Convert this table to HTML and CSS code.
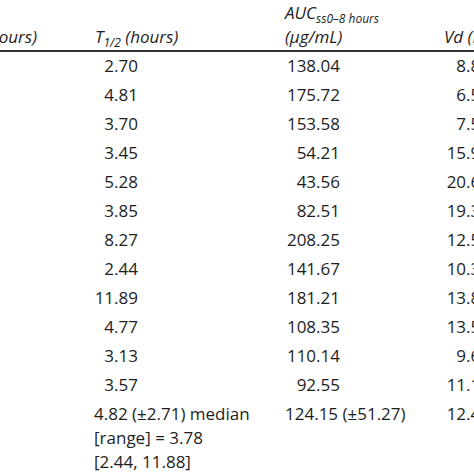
FILE: index.html
```html
<!DOCTYPE html>
<html>
<head>
<meta charset="utf-8">
<link rel="stylesheet" href="styles.css">
</head>
<body>
<div class="table">
  <div class="row head">
    <div class="cell c1"><span class="clip"><i>T<sub>max</sub> (hours)</i></span></div>
    <div class="cell c2"><i>T<sub>1/2</sub> (hours)</i></div>
    <div class="cell c3"><i>AUC<sub>ss0–8 hours</sub><br>(µg/mL)</i></div>
    <div class="cell c4"><i>Vd (L/kg)</i></div>
  </div>
  <div class="row"><div class="cell c1"></div><div class="cell c2"><span class="num n2">2.70</span></div><div class="cell c3"><span class="num n3">138.04</span></div><div class="cell c4"><span class="num n4">8.84</span></div></div>
  <div class="row"><div class="cell c1"></div><div class="cell c2"><span class="num n2">4.81</span></div><div class="cell c3"><span class="num n3">175.72</span></div><div class="cell c4"><span class="num n4">6.52</span></div></div>
  <div class="row"><div class="cell c1"></div><div class="cell c2"><span class="num n2">3.70</span></div><div class="cell c3"><span class="num n3">153.58</span></div><div class="cell c4"><span class="num n4">7.55</span></div></div>
  <div class="row"><div class="cell c1"></div><div class="cell c2"><span class="num n2">3.45</span></div><div class="cell c3"><span class="num n3">54.21</span></div><div class="cell c4"><span class="num n4">15.93</span></div></div>
  <div class="row"><div class="cell c1"></div><div class="cell c2"><span class="num n2">5.28</span></div><div class="cell c3"><span class="num n3">43.56</span></div><div class="cell c4"><span class="num n4">20.61</span></div></div>
  <div class="row"><div class="cell c1"></div><div class="cell c2"><span class="num n2">3.85</span></div><div class="cell c3"><span class="num n3">82.51</span></div><div class="cell c4"><span class="num n4">19.32</span></div></div>
  <div class="row"><div class="cell c1"></div><div class="cell c2"><span class="num n2">8.27</span></div><div class="cell c3"><span class="num n3">208.25</span></div><div class="cell c4"><span class="num n4">12.55</span></div></div>
  <div class="row"><div class="cell c1"></div><div class="cell c2"><span class="num n2">2.44</span></div><div class="cell c3"><span class="num n3">141.67</span></div><div class="cell c4"><span class="num n4">10.33</span></div></div>
  <div class="row"><div class="cell c1"></div><div class="cell c2"><span class="num n2">11.89</span></div><div class="cell c3"><span class="num n3">181.21</span></div><div class="cell c4"><span class="num n4">13.86</span></div></div>
  <div class="row"><div class="cell c1"></div><div class="cell c2"><span class="num n2">4.77</span></div><div class="cell c3"><span class="num n3">108.35</span></div><div class="cell c4"><span class="num n4">13.52</span></div></div>
  <div class="row"><div class="cell c1"></div><div class="cell c2"><span class="num n2">3.13</span></div><div class="cell c3"><span class="num n3">110.14</span></div><div class="cell c4"><span class="num n4">9.64</span></div></div>
  <div class="row"><div class="cell c1"></div><div class="cell c2"><span class="num n2">3.57</span></div><div class="cell c3"><span class="num n3">92.55</span></div><div class="cell c4"><span class="num n4">11.17</span></div></div>
  <div class="row"><div class="cell c1"></div><div class="cell c2">4.82 (±2.71) median<br>[range] = 3.78<br>[2.44, 11.88]</div><div class="cell c3">124.15 (±51.27)</div><div class="cell c4"><span class="num n4">12.46</span></div></div>
</div>
</body>
</html>
```
FILE: styles.css
```css
html, body {
  margin: 0;
  padding: 0;
  background: #ffffff;
  overflow: hidden;
}
body {
  width: 474px;
  height: 474px;
  font-family: "Open Sans", "Liberation Sans", sans-serif;
  font-size: 17px;
  line-height: 24px;
  color: #1d1d1d;
}
.table {
  display: flex;
  flex-direction: column;
  width: 560px;
}
.row {
  display: grid;
  grid-template-columns: 93px 192px 159px 116px;
  padding: 2px 0 3px;
}
.row.head {
  padding: 1px 0 1px;
  border-bottom: 2px solid #333333;
  align-items: end;
}
.cell {
  white-space: nowrap;
}
.head .cell {
  font-style: normal;
}
.c1 {
  display: flex;
  justify-content: flex-end;
  padding-right: 56px;
}
.c2 {
  padding-left: 1px;
}
.head .c2 {
  padding-left: 2px;
}
.c4 {
  padding-left: 2px;
}
.head .c4 {
  padding-left: 0;
}
.num {
  display: inline-block;
  text-align: right;
}
.n2 { width: 44px; }
.n3 { width: 55px; }
.n4 { width: 44px; }
sub {
  font-size: 12px;
  line-height: 0;
  vertical-align: -4px;
}
```
